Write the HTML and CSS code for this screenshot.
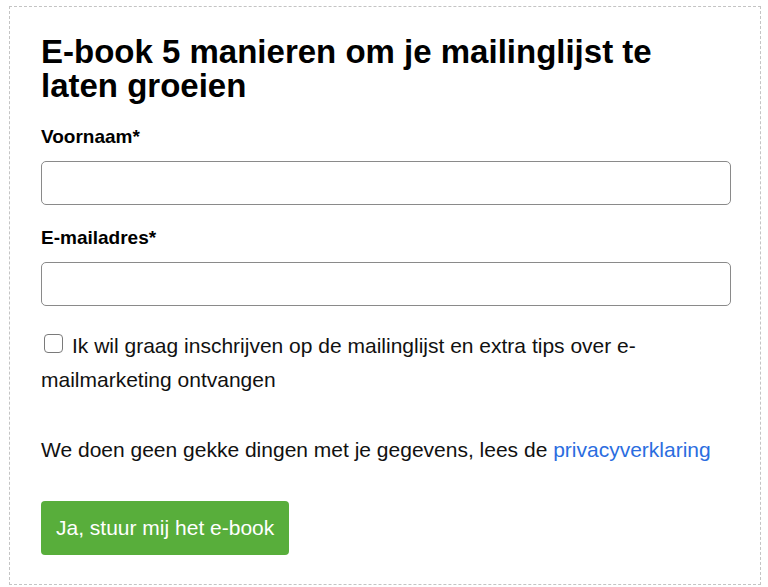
FILE: index.html
```html
<!DOCTYPE html>
<html lang="nl">
<head>
<meta charset="utf-8">
<title>E-book 5 manieren om je mailinglijst te laten groeien</title>
<link rel="stylesheet" href="styles.css">
</head>
<body>
<form class="card">
  <h1 class="title">E-book 5 manieren om je mailinglijst te laten groeien</h1>
  <div class="field">
    <label class="label" for="voornaam">Voornaam*</label>
    <input class="input" id="voornaam" type="text">
  </div>
  <div class="field">
    <label class="label" for="email">E-mailadres*</label>
    <input class="input" id="email" type="email">
  </div>
  <p class="consent"><input class="check" type="checkbox">Ik wil graag inschrijven op de mailinglijst en extra tips over e-mailmarketing ontvangen</p>
  <p class="privacy">We doen geen gekke dingen met je gegevens, lees de <a class="link" href="#">privacyverklaring</a></p>
  <button class="button" type="button">Ja, stuur mij het e-book</button>
</form>
</body>
</html>
```
FILE: styles.css
```css
html, body {
  margin: 0;
  padding: 0;
  background: #ffffff;
}
body {
  font-family: "Liberation Sans", Arial, Helvetica, sans-serif;
  color: #111;
}
.card {
  box-sizing: border-box;
  width: 752px;
  margin: 6px 0 0 9px;
  padding: 28px 29px 29px 31px;
  border: 1px dashed #c4c4c4;
  display: flex;
  flex-direction: column;
  align-items: flex-start;
}
.title {
  margin: 0 0 21px;
  font-size: 33px;
  line-height: 34px;
  font-weight: 700;
  color: #000;
}
.field {
  width: 100%;
  display: flex;
  flex-direction: column;
  margin-bottom: 20px;
}
.field + .field {
  margin-bottom: 23px;
}
.label {
  font-size: 19px;
  line-height: 26px;
  font-weight: 700;
  color: #000;
  margin-bottom: 11px;
}
.input {
  box-sizing: border-box;
  width: 100%;
  height: 44px;
  margin: 0;
  border: 1px solid #8a8a8a;
  border-radius: 5px;
  background: #fff;
  font: inherit;
}
.consent, .privacy {
  margin: 0;
  font-size: 21px;
  line-height: 34px;
  color: #111;
}
.privacy {
  margin-top: 36px;
  margin-bottom: 34px;
}
.check {
  -webkit-appearance: none;
  appearance: none;
  box-sizing: border-box;
  width: 19px;
  height: 19px;
  margin: 0 9px 0 3px;
  border: 1px solid #7a7a7a;
  border-radius: 4px;
  background: #fff;
  vertical-align: 0;
}
.link {
  color: #2b6de0;
  text-decoration: none;
}
.button {
  height: 54px;
  padding: 0 15px;
  margin: 0;
  border: none;
  border-radius: 4px;
  background: #58ae3b;
  color: #fff;
  font-family: "Liberation Sans", Arial, Helvetica, sans-serif;
  font-size: 21px;
  line-height: 54px;
  cursor: pointer;
}
```
